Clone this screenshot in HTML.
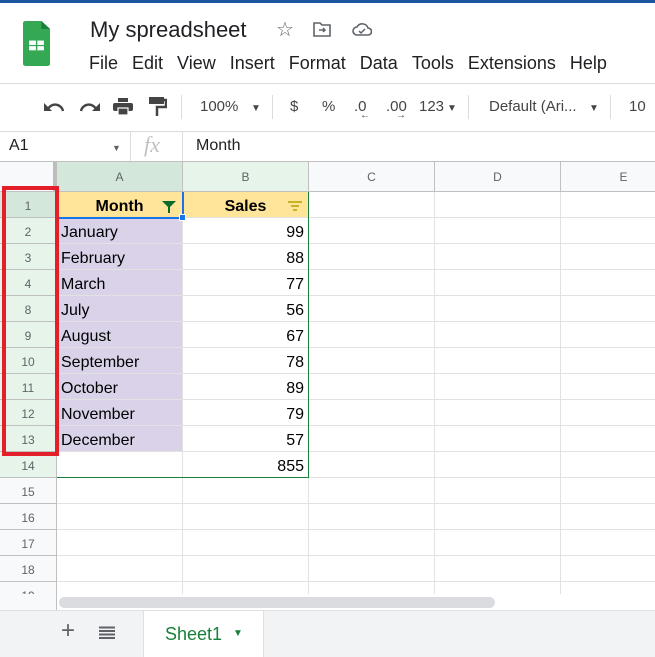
<!DOCTYPE html>
<html><head><style>
*{margin:0;padding:0;box-sizing:border-box}
body{width:655px;height:657px;overflow:hidden;background:#fff;font-family:"Liberation Sans",Arial,sans-serif;position:relative;color:#202124}
.a{position:absolute}
.menu span{margin-right:14px}
.rh{position:absolute;left:0;width:57px;height:26px;border-bottom:1px solid #c0c0c0;border-right:1px solid #c0c0c0;font-size:12px;color:#5f6368;text-align:center;line-height:28px;background:#f8f9fa}
.rh.g{background:#e6f4ea}
.cell{position:absolute;height:26px;border-bottom:1px solid #e2e2e2;border-right:1px solid #e2e2e2;font-size:16px;line-height:29px;padding:0 4px;color:#000}
.ch{position:absolute;top:162px;height:30px;border-right:1px solid #c0c0c0;border-bottom:1px solid #c0c0c0;font-size:12px;color:#5f6368;text-align:center;line-height:30px;background:#f8f9fa}
.tb{position:absolute;top:98px;font-size:15px;color:#444}
</style></head><body>
<div class="a" style="left:0;top:0;width:655px;height:3px;background:#1a55a0"></div>
<svg class="a" style="left:23px;top:21px" width="27" height="45" viewBox="0 0 22 46" preserveAspectRatio="none"><path d="M2 0h13l7 8v36a2 2 0 0 1-2 2H2a2 2 0 0 1-2-2V2a2 2 0 0 1 2-2z" fill="#34a853"/><path d="M15 0v8h7z" fill="#188038"/><rect x="5" y="20" width="12" height="10" fill="#fff"/><rect x="10.5" y="20" width="1.2" height="10" fill="#34a853"/><rect x="5" y="24.5" width="12" height="1.2" fill="#34a853"/></svg>
<div class="a" style="left:90px;top:17px;font-size:22px;color:#202124">My spreadsheet</div>
<div class="a" style="left:276px;top:17px;font-size:20px;color:#5f6368">☆</div>
<svg class="a" style="left:313px;top:21px" width="18" height="16" viewBox="0 0 18 16"><path d="M1 2h6l2 2h8v11H1z" fill="none" stroke="#5f6368" stroke-width="1.6"/><path d="M6 9h6M10 7l2 2-2 2" fill="none" stroke="#5f6368" stroke-width="1.5"/></svg>
<svg class="a" style="left:352px;top:22px" width="20" height="14" viewBox="0 0 20 14"><path d="M5 13a4 4 0 0 1 0-8 6 6 0 0 1 11 1 3.5 3.5 0 0 1 0 7z" fill="none" stroke="#5f6368" stroke-width="1.6"/><path d="M7 9l2 2 4-4" fill="none" stroke="#5f6368" stroke-width="1.5"/></svg>
<div class="a menu" style="left:89px;top:53px;font-size:18px;color:#202124;white-space:nowrap"><span>File</span><span>Edit</span><span>View</span><span>Insert</span><span>Format</span><span>Data</span><span>Tools</span><span>Extensions</span><span>Help</span></div>
<div class="a" style="left:0;top:83px;width:655px;height:1px;background:#dadce0"></div>
<svg class="a" style="left:44px;top:100px" width="22" height="14" viewBox="0 0 22 14"><path d="M4 9a8 8 0 0 1 15 2" fill="none" stroke="#444" stroke-width="2.4"/><path d="M0 3v8h8z" fill="#444"/></svg>
<svg class="a" style="left:78px;top:100px" width="22" height="14" viewBox="0 0 22 14"><path d="M18 9a8 8 0 0 0-15 2" fill="none" stroke="#444" stroke-width="2.4"/><path d="M22 3v8h-8z" fill="#444"/></svg>
<svg class="a" style="left:113px;top:98px" width="20" height="18" viewBox="0 0 20 18"><rect x="5" y="0" width="10" height="4" fill="#444"/><rect x="0" y="5" width="20" height="8" rx="2" fill="#444"/><rect x="5" y="10" width="10" height="7" fill="#444" stroke="#fff" stroke-width="1.2"/></svg>
<svg class="a" style="left:149px;top:97px" width="18" height="20" viewBox="0 0 18 20"><rect x="0" y="0" width="15" height="7" fill="#444"/><path d="M15 3h2v7H8v9" fill="none" stroke="#444" stroke-width="2.5"/></svg>
<div class="a" style="left:181px;top:95px;width:1px;height:24px;background:#dadce0"></div>
<div class="tb" style="left:200px">100%</div><div class="tb" style="left:251px;font-size:10px;top:103px">▼</div>
<div class="a" style="left:272px;top:95px;width:1px;height:24px;background:#dadce0"></div>
<div class="tb" style="left:290px">$</div>
<div class="tb" style="left:322px">%</div>
<div class="tb" style="left:354px">.0</div><div class="tb" style="left:360px;top:110px;font-size:10px">←</div>
<div class="tb" style="left:386px">.00</div><div class="tb" style="left:396px;top:110px;font-size:10px">→</div>
<div class="tb" style="left:419px">123</div><div class="tb" style="left:447px;font-size:10px;top:103px">▼</div>
<div class="a" style="left:468px;top:95px;width:1px;height:24px;background:#dadce0"></div>
<div class="tb" style="left:489px">Default (Ari...</div><div class="tb" style="left:589px;font-size:10px;top:103px">▼</div>
<div class="a" style="left:610px;top:95px;width:1px;height:24px;background:#dadce0"></div>
<div class="tb" style="left:629px">10</div>
<div class="a" style="left:0;top:131px;width:655px;height:1px;background:#dadce0"></div>
<div class="a" style="left:9px;top:137px;font-size:16px">A1</div>
<div class="a" style="left:112px;top:143px;font-size:9px;color:#5f6368">▼</div>
<div class="a" style="left:130px;top:132px;width:1px;height:29px;background:#dadce0"></div>
<div class="a" style="left:144px;top:132px;font-size:22px;color:#c0c0c0;font-family:'Liberation Serif',serif;font-style:italic">fx</div>
<div class="a" style="left:182px;top:132px;width:1px;height:29px;background:#dadce0"></div>
<div class="a" style="left:196px;top:137px;font-size:16px">Month</div>
<div class="a" style="left:0;top:161px;width:655px;height:1px;background:#c0c0c0"></div>
<div class="ch" style="left:0;width:57px;border-right:4px solid #bdbdbd"></div>
<div class="ch" style="left:57px;width:126px;background:#d3e8da">A</div>
<div class="ch" style="left:183px;width:126px;background:#e6f4ea">B</div>
<div class="ch" style="left:309px;width:126px">C</div>
<div class="ch" style="left:435px;width:126px">D</div>
<div class="ch" style="left:561px;width:126px">E</div>
<div id="g"></div>
<script>
var rows=[["1","Month","Sales"],["2","January","99"],["3","February","88"],["4","March","77"],["8","July","56"],["9","August","67"],["10","September","78"],["11","October","89"],["12","November","79"],["13","December","57"],["14","","855"],["15","",""],["16","",""],["17","",""],["18","",""],["19","",""]];
var h="";
rows.forEach(function(r,i){var t=192+i*26;var hd=i==0;var g=i<11;
h+='<div class="rh'+(g?' g':'')+'" style="top:'+t+'px;'+(hd?'background:#d3e8da':'')+'">'+r[0]+'</div>';
var bgA=hd?'#ffe599':(i<10?'#d9d2e9':'#fff');var bgB=hd?'#ffe599':'#fff';
h+='<div class="cell" style="left:57px;width:126px;top:'+t+'px;background:'+bgA+';'+(hd?'font-weight:bold;text-align:center':'')+'">'+r[1]+'</div>';
h+='<div class="cell" style="left:183px;width:126px;top:'+t+'px;background:'+bgB+';'+(hd?'font-weight:bold;text-align:center':'text-align:right')+'">'+r[2]+'</div>';
h+='<div class="cell" style="left:309px;width:126px;top:'+t+'px"></div><div class="cell" style="left:435px;width:126px;top:'+t+'px"></div><div class="cell" style="left:561px;width:126px;top:'+t+'px"></div>';});
document.getElementById('g').innerHTML=h;
</script>
<svg class="a" style="left:162px;top:200px" width="14" height="14" viewBox="0 0 14 14"><path d="M0 1h14L8 7v6H6V7z" fill="#0b6b2b"/></svg>
<svg class="a" style="left:288px;top:201px" width="14" height="12" viewBox="0 0 14 12"><path d="M0 1h14M3 5h8M5 9h4" stroke="#b8a200" stroke-width="1.5"/></svg>
<div class="a" style="left:57px;top:217px;width:126px;height:2px;background:#1a73e8"></div>
<div class="a" style="left:182px;top:192px;width:2px;height:26px;background:#1a73e8"></div>
<div class="a" style="left:179px;top:214px;width:7px;height:7px;background:#1a73e8;border:1px solid #fff"></div>
<div class="a" style="left:308px;top:192px;width:1px;height:286px;background:#188038"></div>
<div class="a" style="left:57px;top:477px;width:252px;height:1px;background:#188038"></div>
<div class="a" style="left:2px;top:186px;width:57px;height:270px;border:4px solid #e3202a"></div>
<div class="a" style="left:0;top:594px;width:655px;height:16px;background:#fff"></div>
<div class="a" style="left:0;top:594px;width:57px;height:16px;background:#f8f9fa;border-right:1px solid #c0c0c0"></div>
<div class="a" style="left:59px;top:597px;width:436px;height:11px;border-radius:6px;background:#dadce0"></div>
<div class="a" style="left:0;top:610px;width:655px;height:47px;background:#f1f3f4;border-top:1px solid #e0e0e0"></div>
<div class="a" style="left:61px;top:617px;font-size:24px;color:#5f6368">+</div>
<svg class="a" style="left:99px;top:626px" width="16" height="13" viewBox="0 0 16 13"><path d="M0 1.5h16M0 5h16M0 8.5h16M0 12h16" stroke="#5f6368" stroke-width="2"/></svg>
<div class="a" style="left:143px;top:611px;width:121px;height:46px;background:#fff;border-left:1px solid #e0e0e0;border-right:1px solid #e0e0e0"></div>
<div class="a" style="left:165px;top:624px;font-size:18px;color:#188038">Sheet1</div>
<div class="a" style="left:233px;top:628px;font-size:10px;color:#188038">▼</div>
</body></html>
